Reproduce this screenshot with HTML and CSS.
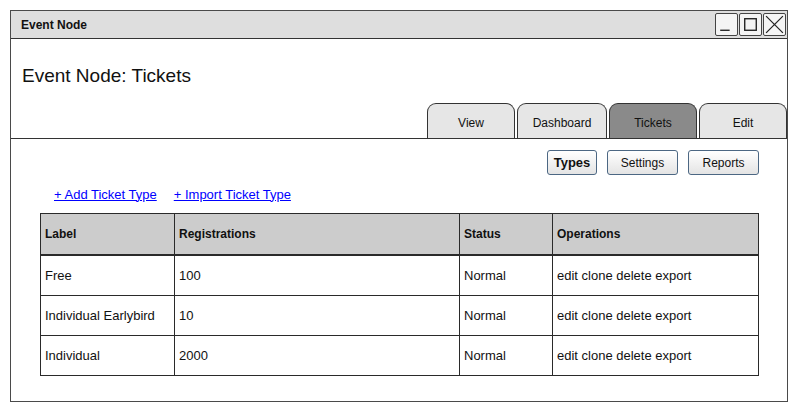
FILE: index.html
```html
<!DOCTYPE html>
<html>
<head>
<meta charset="utf-8">
<link rel="stylesheet" href="styles.css">
</head>
<body>
<div class="window">
  <div class="titlebar">
    <span class="title">Event Node</span>
    <div class="controls">
      <span class="ctl"><svg width="20" height="20" viewBox="0 0 20 20"><line x1="4" y1="15.5" x2="13" y2="15.5" stroke="#222" stroke-width="1.3"/></svg></span>
      <span class="ctl"><svg width="20" height="20" viewBox="0 0 20 20"><rect x="4.5" y="4.5" width="11" height="11" fill="none" stroke="#222" stroke-width="1.3"/></svg></span>
      <span class="ctl"><svg width="20" height="20" viewBox="0 0 20 20"><path d="M2 2 L18 18 M18 2 L2 18" stroke="#222" stroke-width="1.2"/></svg></span>
    </div>
  </div>
  <div class="header">
    <h1 class="heading">Event Node: Tickets</h1>
    <div class="tabs">
      <div class="tab w88">View</div>
      <div class="tab w90">Dashboard</div>
      <div class="tab w88 active">Tickets</div>
      <div class="tab w88">Edit</div>
    </div>
  </div>
  <div class="panel">
    <div class="btnrow">
      <button class="btn types">Types</button>
      <button class="btn wide">Settings</button>
      <button class="btn wide">Reports</button>
    </div>
    <div class="links">
      <a href="#" class="link">+ Add Ticket Type</a>
      <a href="#" class="link">+ Import Ticket Type</a>
    </div>
    <table class="grid">
      <colgroup>
        <col class="c1"><col class="c2"><col class="c3"><col class="c4">
      </colgroup>
      <thead>
        <tr><th>Label</th><th>Registrations</th><th>Status</th><th>Operations</th></tr>
      </thead>
      <tbody>
        <tr><td>Free</td><td>100</td><td>Normal</td><td>edit clone delete export</td></tr>
        <tr><td>Individual Earlybird</td><td>10</td><td>Normal</td><td>edit clone delete export</td></tr>
        <tr><td>Individual</td><td>2000</td><td>Normal</td><td>edit clone delete export</td></tr>
      </tbody>
    </table>
  </div>
</div>
</body>
</html>
```
FILE: styles.css
```css
html, body {
  margin: 0;
  padding: 0;
  background: #ffffff;
}
body {
  padding: 10px;
  font-family: "Liberation Sans", Arial, sans-serif;
  color: #111;
}
.window {
  width: 776px;
  height: 390px;
  border: 1.5px solid #4a4a4a;
  display: flex;
  flex-direction: column;
  background: #fff;
}
.titlebar {
  height: 27px;
  background: #dedede;
  border-bottom: 1px solid #333;
  display: flex;
  align-items: center;
  justify-content: space-between;
  padding-left: 10px;
  padding-right: 1px;
}
.title {
  font-size: 12px;
  font-weight: bold;
}
.controls {
  display: flex;
  gap: 1px;
}
.ctl {
  width: 21px;
  height: 21px;
  border: 1px solid #444;
  border-radius: 2px;
  background: #f4f4f4;
  display: block;
}
.ctl svg { display: block; width: 21px; height: 21px; }
.header {
  height: 99px;
  display: flex;
  flex-direction: column;
  justify-content: space-between;
}
.heading {
  margin: 26px 0 0 11px;
  font-size: 19px;
  font-weight: normal;
  line-height: 22px;
}
.tabs {
  display: flex;
  justify-content: flex-end;
  gap: 2px;
  margin-bottom: -1px;
}
.tab {
  border: 1px solid #333;
  border-bottom: none;
  border-radius: 9px 9px 0 0;
  background: #e6e6e6;
  font-size: 12px;
  display: flex;
  align-items: center;
  justify-content: center;
  padding-top: 2px;
  box-sizing: border-box;
  height: 36px;
}
.w88 { width: 88px; }
.w90 { width: 90px; }
.tab.active {
  background: #8a8a8a;
  color: #111;
}
.panel {
  flex: 1;
  border-top: 1.5px solid #333;
  display: flex;
  flex-direction: column;
}
.btnrow {
  display: flex;
  justify-content: flex-end;
  gap: 10px;
  padding: 11px 28px 0 0;
}
.btn {
  height: 25px;
  border: 1.5px solid #4c6783;
  border-radius: 3px;
  background: linear-gradient(#ffffff, #e4e4e4);
  font-family: "Liberation Sans", Arial, sans-serif;
  font-size: 12px;
  color: #111;
  padding: 0;
}
.btn.types {
  width: 50px;
  font-weight: bold;
  font-size: 13px;
}
.btn.wide { width: 71px; }
.links {
  display: flex;
  gap: 17px;
  padding: 12px 0 0 43px;
  height: 26px;
  box-sizing: border-box;
  align-items: center;
}
.link {
  color: #0000ff;
  font-size: 13px;
  text-decoration: underline;
}
.grid {
  margin: 12px 0 0 29px;
  border-collapse: collapse;
  width: 718px;
  table-layout: fixed;
  font-size: 13px;
}
.c1 { width: 134px; }
.c2 { width: 285px; }
.c3 { width: 93px; }
.c4 { width: 206px; }
.grid th, .grid td {
  border: 1.5px solid #2a2a2a;
  text-align: left;
  padding: 0 0 0 4px;
  white-space: nowrap;
}
.grid th {
  background: #cccccc;
  height: 40px;
  font-weight: bold;
  font-size: 12px;
  border-bottom-width: 2px;
}
.grid td {
  height: 39px;
}
```
